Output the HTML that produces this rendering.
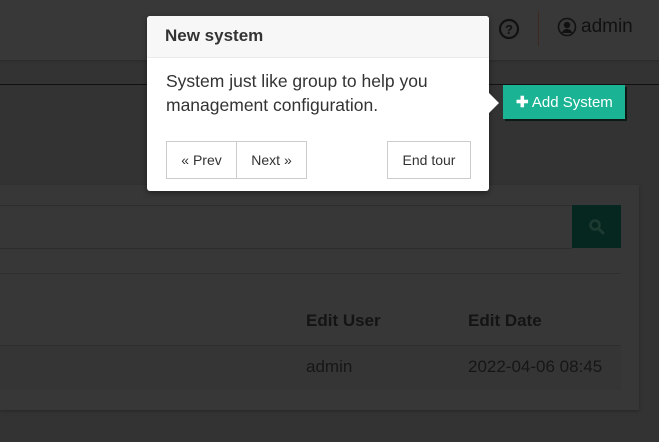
<!DOCTYPE html><html><head><style>
body{margin:0;width:659px;height:442px;background:#333;font-family:"Liberation Sans",sans-serif;position:relative;overflow:hidden}
.a{position:absolute}
</style></head><body>
<div class="a" style="left:0;top:0;width:659px;height:60px;background:#383838;box-shadow:0 1px 2px #2a2a2a"></div>
<div class="a" style="left:0;top:84px;width:659px;height:1px;background:#111"></div>
<svg class="a" style="left:498px;top:18px" width="22" height="22" viewBox="0 0 22 22"><circle cx="11" cy="11" r="9" fill="none" stroke="#111" stroke-width="2.2"/><text x="11" y="16" font-size="13" font-weight="bold" text-anchor="middle" fill="#111" font-family="Liberation Sans">?</text></svg>
<div class="a" style="left:538px;top:11px;width:1px;height:35px;background:#3c2a22"></div>
<svg class="a" style="left:557px;top:17px" width="20" height="20" viewBox="0 0 20 20"><circle cx="10" cy="10" r="8.5" fill="none" stroke="#111" stroke-width="1.6"/><circle cx="10" cy="8" r="3.2" fill="#111"/><path d="M4.5 16c1.5-3 3.5-4 5.5-4s4 1 5.5 4" fill="#111"/></svg>
<div class="a" style="left:581px;top:16px;font-size:19px;color:#111">admin</div>
<div class="a" style="left:0;top:185px;width:639px;height:225px;background:#373737;box-shadow:0 1px 3px #262626"></div>
<div class="a" style="left:0;top:205px;width:572px;height:42px;border-top:1px solid #2d2d2d;border-bottom:1px solid #2d2d2d"></div>
<div class="a" style="left:572px;top:205px;width:49px;height:43px;background:#062720"></div>
<svg class="a" style="left:588px;top:218px" width="18" height="18" viewBox="0 0 18 18"><circle cx="7" cy="7" r="4.5" fill="none" stroke="#1d3a31" stroke-width="2.6"/><path d="M10.5 10.5L15 15" stroke="#1d3a31" stroke-width="3" stroke-linecap="round"/></svg>
<div class="a" style="left:0;top:273px;width:621px;height:1px;background:#2f2f2f"></div>
<div class="a" style="left:306px;top:311px;font-size:17px;font-weight:bold;color:#141414">Edit User</div>
<div class="a" style="left:468px;top:311px;font-size:17px;font-weight:bold;color:#141414">Edit Date</div>
<div class="a" style="left:0;top:345px;width:621px;height:1px;background:#2d2d2d"></div>
<div class="a" style="left:0;top:346px;width:621px;height:44px;background:#353535"></div>
<div class="a" style="left:306px;top:357px;font-size:17px;color:#161616">admin</div>
<div class="a" style="left:468px;top:357px;font-size:17px;color:#161616">2022-04-06 08:45</div>
<div class="a" style="left:503px;top:85px;width:122px;height:34px;background:#1ab394;box-shadow:2px 2px 0 #0c1a15"></div>
<div class="a" style="left:516px;top:93px;font-size:15px;color:#fff"><b>✚</b> Add System</div>
<div class="a" style="left:147px;top:16px;width:342px;height:175px;background:#fff;border-radius:3px;box-shadow:0 2px 6px rgba(0,0,0,.4)"></div>
<div class="a" style="left:147px;top:16px;width:342px;height:41px;background:#f7f7f7;border-bottom:1px solid #ebebeb;border-radius:3px 3px 0 0"></div>
<div class="a" style="left:165px;top:26px;font-size:17px;font-weight:bold;color:#333">New system</div>
<div class="a" style="left:489px;top:93px;width:0;height:0;border-top:10px solid transparent;border-bottom:10px solid transparent;border-left:10px solid #fff"></div>
<div class="a" style="left:166px;top:69px;font-size:17.5px;line-height:24px;color:#333;width:320px">System just like group to help you<br>management configuration.</div>
<div class="a" style="left:166px;top:141px;width:69px;height:36px;border:1px solid #ccc;font-size:14px;color:#333;line-height:36px;text-align:center">« Prev</div>
<div class="a" style="left:236px;top:141px;width:69px;height:36px;border:1px solid #ccc;font-size:14px;color:#333;line-height:36px;text-align:center">Next »</div>
<div class="a" style="left:387px;top:141px;width:82px;height:36px;border:1px solid #ccc;font-size:14px;color:#333;line-height:36px;text-align:center">End tour</div>
</body></html>
